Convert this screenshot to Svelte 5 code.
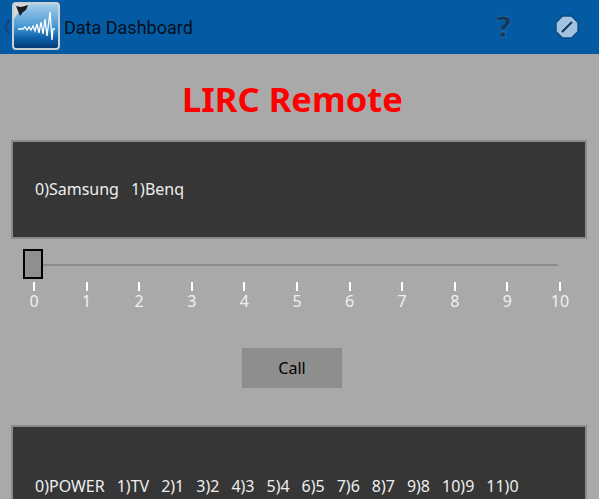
<script lang="ts">
  const ticks = [0, 1, 2, 3, 4, 5, 6, 7, 8, 9, 10];
  const devices = ["0)Samsung", "1)Benq"];
  const buttons = [
    "0)POWER", "1)TV", "2)1", "3)2", "4)3", "5)4", "6)5", "7)6", "8)7", "9)8", "10)9", "11)0",
  ];
</script>

<div class="screen">
  <header class="bar">
    <svg class="back" viewBox="0 0 8 16" width="8" height="16" aria-hidden="true">
      <path d="M6.5 1 L2 8 L6.5 15" fill="none" stroke="#0b4a80" stroke-width="2.4" />
    </svg>
    <svg class="logo" viewBox="0 0 48 48" width="48" height="48" aria-hidden="true">
      <defs>
        <linearGradient id="logo-bg" x1="0" y1="0" x2="0" y2="1">
          <stop offset="0" stop-color="#a9d0ec" />
          <stop offset="0.5" stop-color="#4a9ad4" />
          <stop offset="0.75" stop-color="#0d63ad" />
          <stop offset="1" stop-color="#04386f" />
        </linearGradient>
      </defs>
      <rect x="1" y="1" width="46" height="46" rx="3" fill="url(#logo-bg)" stroke="#c9d0d6" stroke-width="2" />
      <path d="M2 17 V5 Q2 2 5 2 H19 Q9 5 2 17 Z" fill="#d3d9de" />
      <path d="M4 4 L9 5 L16 3 L14 8 L11 10 L8 14 L6 9 Z" fill="#1c1c1c" />
      <path
        d="M6 27 H11 L13 25 L15 28 L17 25 L19 28 L21 24 L23 29 L25 22 L27 31 L29 20 L31 32 L33 17 L35 34 L38 10 L40 38 L41 27 H43"
        fill="none"
        stroke="#fff"
        stroke-width="1.3"
      />
    </svg>
    <span class="title">Data Dashboard</span>
    <span class="help">?</span>
    <svg class="stop" viewBox="0 0 24 24" width="24" height="24" aria-hidden="true">
      <path
        d="M7.5 1 H16.5 L23 7.5 V16.5 L16.5 23 H7.5 L1 16.5 V7.5 Z"
        fill="#a3c4e0"
        stroke="#0b4a80"
        stroke-width="1.4"
      />
      <path d="M7 17 L17 7" stroke="#12385c" stroke-width="2.2" />
    </svg>
  </header>

  <h1 class="heading">LIRC Remote</h1>

  <div class="panel panel-top">
    <p>{#each devices as d}<span>{d}</span>{/each}</p>
  </div>

  <div class="slider">
    <div class="track"></div>
    <div class="thumb"></div>
    <div class="ticks">
      {#each ticks as t}
        <div class="tick"><i></i><span>{t}</span></div>
      {/each}
    </div>
  </div>

  <div class="call-row">
    <button type="button" class="call">Call</button>
  </div>

  <div class="panel panel-bottom">
    <p>{#each buttons as b}<span>{b}</span>{/each}</p>
  </div>
</div>

<style>
  :global(body) {
    margin: 0;
    background: #a9a9a9;
  }

  .screen {
    height: 499px;
    overflow: hidden;
    background: #a9a9a9;
    font-family: "Noto Sans", sans-serif;
  }

  .bar {
    display: flex;
    align-items: center;
    height: 54px;
    padding-left: 3px;
    background: #045ba3;
  }

  .back {
    margin-right: 1px;
  }

  .logo {
    flex-shrink: 0;
    align-self: flex-start;
    margin-top: 2px;
  }

  .title {
    margin-left: 4px;
    flex: 1;
    font-family: "Roboto", sans-serif;
    font-size: 18px;
    color: #05111d;
  }

  .help {
    margin-right: 43px;
    font-family: "DejaVu Sans", sans-serif;
    font-weight: bold;
    font-size: 29px;
    line-height: 30px;
    color: #12385c;
    -webkit-text-stroke: 0.4px #3a7fb8;
  }

  .stop {
    margin-right: 20px;
  }

  .heading {
    margin: 0;
    box-sizing: border-box;
    padding-top: 22px;
    height: 86px;
    text-align: center;
    font-size: 34.6px;
    line-height: 46px;
    font-weight: 700;
    color: #ff0000;
    transform: translateX(-7px);
  }

  .panel {
    margin: 0 12px 0 11px;
    box-sizing: border-box;
    background: #363636;
    border: 2px solid #8b8b8b;
    color: #eeeeee;
    font-size: 16px;
  }

  .panel p {
    margin: 0;
    display: flex;
    white-space: nowrap;
  }

  .panel-top {
    height: 99px;
    padding: 36px 0 0 22px;
  }

  .panel-top p {
    gap: 12px;
  }

  .panel-bottom {
    margin-top: 37px;
    height: 100px;
    padding: 48px 0 0 22px;
  }

  .panel-bottom p {
    gap: 12px;
  }

  .slider {
    position: relative;
    box-sizing: border-box;
    height: 83px;
    padding-top: 25px;
  }

  .track {
    margin: 0 41px 0 42px;
    height: 2px;
    background: #8b8b8b;
  }

  .thumb {
    position: absolute;
    left: 23px;
    top: 10px;
    width: 20px;
    height: 30px;
    box-sizing: border-box;
    background: #8f8f8f;
    border: 2px solid #000;
  }

  .ticks {
    display: flex;
    justify-content: space-between;
    margin: 16px 19px 0 14px;
    color: #f0f0f0;
    font-size: 16px;
  }

  .tick {
    display: flex;
    flex-direction: column;
    align-items: center;
    width: 40px;
    line-height: 20px;
  }

  .tick i {
    width: 2px;
    height: 9px;
    background: #fff;
  }

  .call-row {
    display: flex;
    justify-content: center;
    margin-top: 26px;
    transform: translateX(-8px);
  }

  .call {
    width: 100px;
    height: 40px;
    border: 0;
    padding: 0 0 0 1px;
    background: #8e8e8e;
    color: #000;
    font: inherit;
    font-size: 16px;
  }
</style>
